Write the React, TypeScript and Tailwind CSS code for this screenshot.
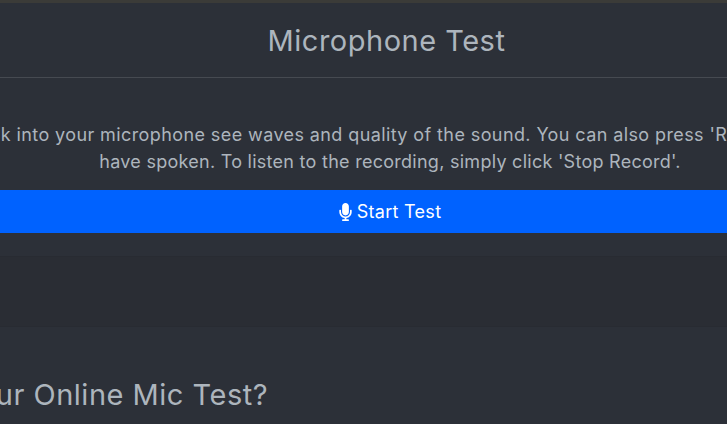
import { FaMicrophone } from "react-icons/fa";

export default function App() {
  return (
    <div className="h-[424px] w-[727px] overflow-hidden bg-[#2c3038] font-['Inter',sans-serif]">
      <div className="ml-[-220px] w-[1220px]">
        <div className="h-[3px] bg-[#3b3b38]" />

        {/* Card header */}
        <div className="h-[75px] border-b border-[#464a51] pr-[7px] pt-[19px] text-center">
          <h1 className="text-[29px] leading-[38px] font-normal tracking-[0.5px] text-[#adb5bd]">
            Microphone Test
          </h1>
        </div>

        {/* Card body */}
        <div className="flex flex-col items-center pt-[43px]">
          <p className="text-center text-[18px] leading-[27px] tracking-[0.27px] whitespace-nowrap text-[#adb5bd]">
            <span className="block pl-[114px] tracking-[0.4px]">
              Speak into your microphone see waves and quality of the sound. You can also press 'Record' to hear what you
            </span>
            <span className="block">
              have spoken. To listen to the recording, simply click 'Stop Record'.
            </span>
          </p>
          <button className="mt-[15px] flex h-[43px] w-full items-center justify-center gap-[5px] bg-[#0062ff] text-[18px] tracking-[0.3px] text-white">
            <FaMicrophone className="h-[18px] w-[13px]" />
            Start Test
          </button>
        </div>

        {/* Empty result panel */}
        <div className="mt-[23px] h-[71px] border-y border-[#282b32] bg-[#2a2d34]" />

        <div className="pt-[49px] pl-[79px]">
          <h2 className="text-[29px] leading-[38px] font-normal tracking-[0.5px] whitespace-nowrap text-[#adb5bd]">
            What is Our Online Mic Test?
          </h2>
        </div>
      </div>
    </div>
  );
}
